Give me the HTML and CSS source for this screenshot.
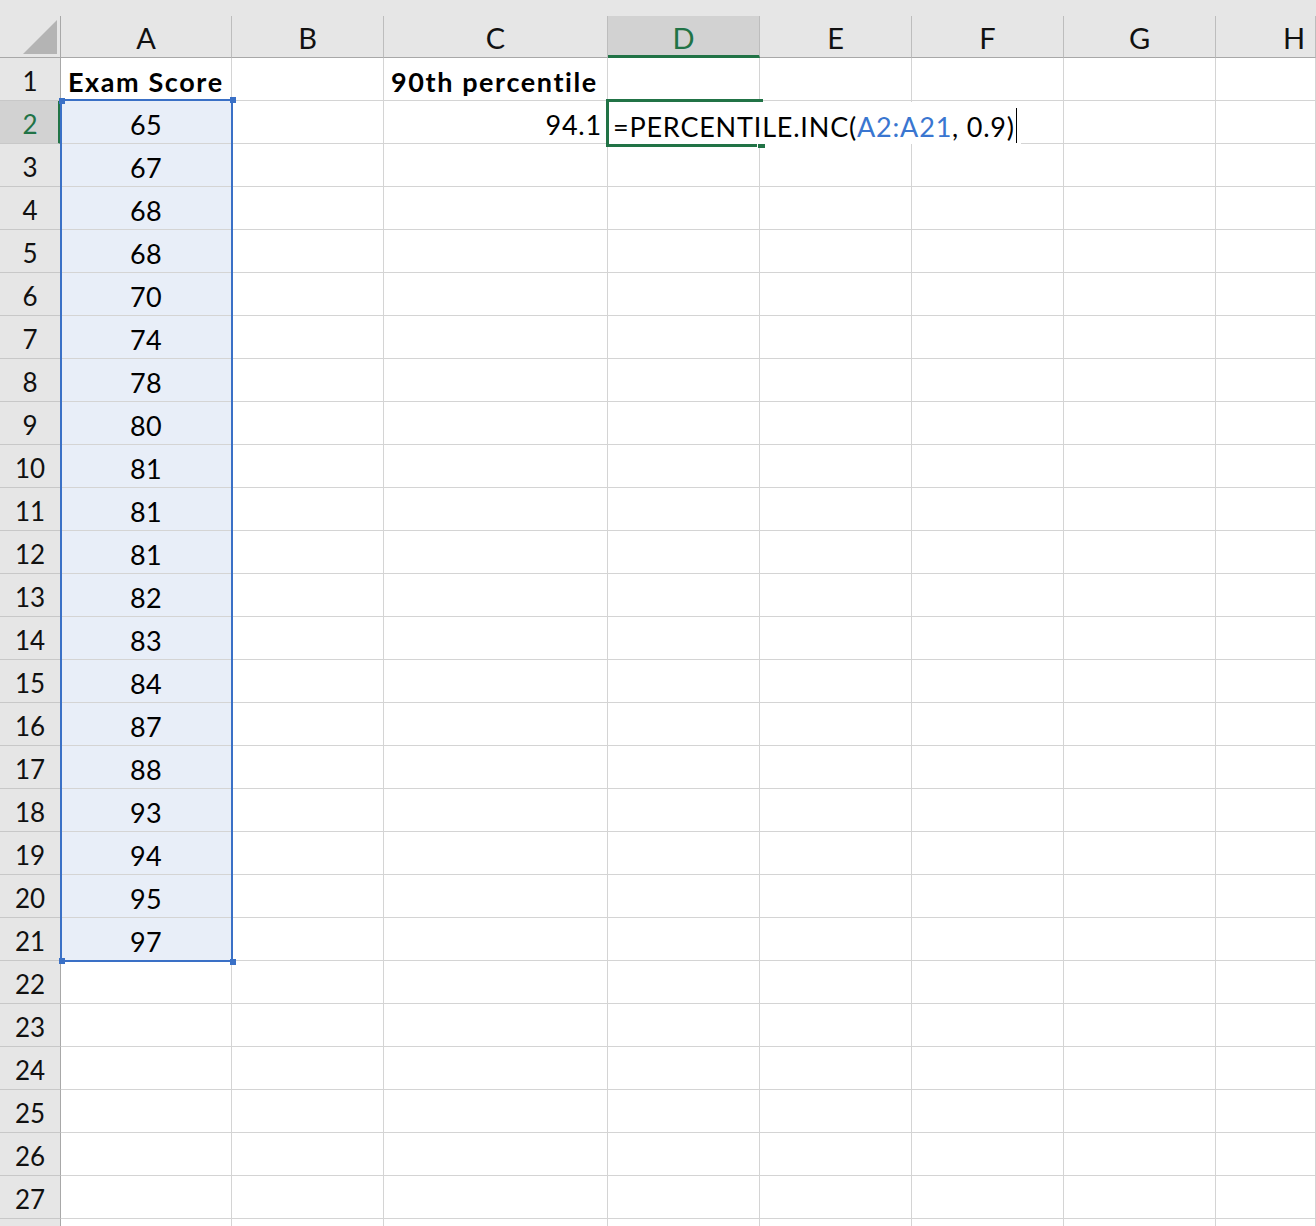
FILE: index.html
```html
<!DOCTYPE html>
<html>
<head>
<meta charset="utf-8">
<link rel="stylesheet" href="styles.css">
</head>
<body>
<div class="sheet">
  <div class="topstrip"></div>
  <div class="grid">
    <div class="corner"><svg width="36" height="36" viewBox="0 0 36 36"><polygon points="1,35 35,35 35,1" fill="#b4b4b4"/></svg></div>
    <div class="ch">A</div><div class="ch">B</div><div class="ch">C</div><div class="ch on">D</div><div class="ch">E</div><div class="ch">F</div><div class="ch">G</div><div class="ch last">H</div>

    <div class="rh">1</div><div class="c b">Exam Score</div><div class="c"></div><div class="c b">90th percentile</div><div class="c"></div><div class="c"></div><div class="c"></div><div class="c"></div><div class="c"></div>
    <div class="rh on">2</div><div class="c n sel">65</div><div class="c"></div><div class="c r">94.1</div><div class="c"></div><div class="c"></div><div class="c"></div><div class="c"></div><div class="c"></div>
    <div class="rh">3</div><div class="c n sel">67</div><div class="c"></div><div class="c"></div><div class="c"></div><div class="c"></div><div class="c"></div><div class="c"></div><div class="c"></div>
    <div class="rh">4</div><div class="c n sel">68</div><div class="c"></div><div class="c"></div><div class="c"></div><div class="c"></div><div class="c"></div><div class="c"></div><div class="c"></div>
    <div class="rh">5</div><div class="c n sel">68</div><div class="c"></div><div class="c"></div><div class="c"></div><div class="c"></div><div class="c"></div><div class="c"></div><div class="c"></div>
    <div class="rh">6</div><div class="c n sel">70</div><div class="c"></div><div class="c"></div><div class="c"></div><div class="c"></div><div class="c"></div><div class="c"></div><div class="c"></div>
    <div class="rh">7</div><div class="c n sel">74</div><div class="c"></div><div class="c"></div><div class="c"></div><div class="c"></div><div class="c"></div><div class="c"></div><div class="c"></div>
    <div class="rh">8</div><div class="c n sel">78</div><div class="c"></div><div class="c"></div><div class="c"></div><div class="c"></div><div class="c"></div><div class="c"></div><div class="c"></div>
    <div class="rh">9</div><div class="c n sel">80</div><div class="c"></div><div class="c"></div><div class="c"></div><div class="c"></div><div class="c"></div><div class="c"></div><div class="c"></div>
    <div class="rh">10</div><div class="c n sel">81</div><div class="c"></div><div class="c"></div><div class="c"></div><div class="c"></div><div class="c"></div><div class="c"></div><div class="c"></div>
    <div class="rh">11</div><div class="c n sel">81</div><div class="c"></div><div class="c"></div><div class="c"></div><div class="c"></div><div class="c"></div><div class="c"></div><div class="c"></div>
    <div class="rh">12</div><div class="c n sel">81</div><div class="c"></div><div class="c"></div><div class="c"></div><div class="c"></div><div class="c"></div><div class="c"></div><div class="c"></div>
    <div class="rh">13</div><div class="c n sel">82</div><div class="c"></div><div class="c"></div><div class="c"></div><div class="c"></div><div class="c"></div><div class="c"></div><div class="c"></div>
    <div class="rh">14</div><div class="c n sel">83</div><div class="c"></div><div class="c"></div><div class="c"></div><div class="c"></div><div class="c"></div><div class="c"></div><div class="c"></div>
    <div class="rh">15</div><div class="c n sel">84</div><div class="c"></div><div class="c"></div><div class="c"></div><div class="c"></div><div class="c"></div><div class="c"></div><div class="c"></div>
    <div class="rh">16</div><div class="c n sel">87</div><div class="c"></div><div class="c"></div><div class="c"></div><div class="c"></div><div class="c"></div><div class="c"></div><div class="c"></div>
    <div class="rh">17</div><div class="c n sel">88</div><div class="c"></div><div class="c"></div><div class="c"></div><div class="c"></div><div class="c"></div><div class="c"></div><div class="c"></div>
    <div class="rh">18</div><div class="c n sel">93</div><div class="c"></div><div class="c"></div><div class="c"></div><div class="c"></div><div class="c"></div><div class="c"></div><div class="c"></div>
    <div class="rh">19</div><div class="c n sel">94</div><div class="c"></div><div class="c"></div><div class="c"></div><div class="c"></div><div class="c"></div><div class="c"></div><div class="c"></div>
    <div class="rh">20</div><div class="c n sel">95</div><div class="c"></div><div class="c"></div><div class="c"></div><div class="c"></div><div class="c"></div><div class="c"></div><div class="c"></div>
    <div class="rh">21</div><div class="c n sel">97</div><div class="c"></div><div class="c"></div><div class="c"></div><div class="c"></div><div class="c"></div><div class="c"></div><div class="c"></div>
    <div class="rh">22</div><div class="c"></div><div class="c"></div><div class="c"></div><div class="c"></div><div class="c"></div><div class="c"></div><div class="c"></div><div class="c"></div>
    <div class="rh">23</div><div class="c"></div><div class="c"></div><div class="c"></div><div class="c"></div><div class="c"></div><div class="c"></div><div class="c"></div><div class="c"></div>
    <div class="rh">24</div><div class="c"></div><div class="c"></div><div class="c"></div><div class="c"></div><div class="c"></div><div class="c"></div><div class="c"></div><div class="c"></div>
    <div class="rh">25</div><div class="c"></div><div class="c"></div><div class="c"></div><div class="c"></div><div class="c"></div><div class="c"></div><div class="c"></div><div class="c"></div>
    <div class="rh">26</div><div class="c"></div><div class="c"></div><div class="c"></div><div class="c"></div><div class="c"></div><div class="c"></div><div class="c"></div><div class="c"></div>
    <div class="rh">27</div><div class="c"></div><div class="c"></div><div class="c"></div><div class="c"></div><div class="c"></div><div class="c"></div><div class="c"></div><div class="c"></div>
    <div class="rh"></div><div class="c"></div><div class="c"></div><div class="c"></div><div class="c"></div><div class="c"></div><div class="c"></div><div class="c"></div><div class="c"></div>
  </div>

  <div class="range">
    <span class="hd tl"></span><span class="hd tr"></span><span class="hd bl"></span><span class="hd br"></span>
  </div>
  <div class="active"><span class="fill"></span></div>
  <div class="editor">=PERCENTILE.INC(<span class="ref">A2:A21</span>, 0.9)<span class="caret"></span></div>
</div>
</body>
</html>
```

FILE: styles.css
```css
html, body {
  margin: 0;
  padding: 0;
  background: #ffffff;
  overflow: hidden;
}

.sheet {
  position: relative;
  width: 1316px;
  height: 1226px;
  overflow: hidden;
  font-family: Lato, "Open Sans", sans-serif;
  font-size: 27px;
  color: #000;
}

.topstrip {
  height: 16px;
  background: #e6e6e6;
}

.grid {
  display: grid;
  grid-template-columns: 61px 171px 152px 224px 152px 152px 152px 152px 100px;
  grid-template-rows: 42px repeat(28, 43px);
}

.corner {
  background: #e6e6e6;
  border-right: 1px solid #a8a8a8;
  border-bottom: 1px solid #a8a8a8;
  box-sizing: border-box;
  display: flex;
  align-items: flex-start;
  justify-content: flex-end;
  padding: 3px 2px 0 0;
}

.ch {
  box-sizing: border-box;
  background: #e6e6e6;
  border-right: 1px solid #bdbdbd;
  border-bottom: 1px solid #a8a8a8;
  display: flex;
  align-items: flex-end;
  justify-content: center;
  font-size: 29px;
  line-height: 31px;
  padding-bottom: 4px;
  color: #111;
}

.ch.on {
  background: #d2d2d2;
  color: #217346;
  border-bottom: 3px solid #217346;
  padding-bottom: 2px;
}

.ch.last {
  justify-content: flex-start;
  padding-left: 67px;
}

.rh {
  box-sizing: border-box;
  background: #e6e6e6;
  border-right: 1px solid #a8a8a8;
  border-bottom: 1px solid #c8c8c8;
  display: flex;
  align-items: flex-end;
  justify-content: center;
  font-size: 26px;
  line-height: 31px;
  padding-bottom: 3px;
  color: #111;
}

.rh.on {
  background: #d2d2d2;
  color: #217346;
  border-right: 3px solid #217346;
  padding-left: 2px;
}

.c {
  box-sizing: border-box;
  border-right: 1px solid #d4d4d4;
  border-bottom: 1px solid #d4d4d4;
  display: flex;
  align-items: flex-end;
  justify-content: flex-start;
  line-height: 31px;
  letter-spacing: 0.8px;
  padding: 0 5px 3px 7px;
  white-space: nowrap;
}

.c.b { font-weight: 700; letter-spacing: 1.6px; }
.c.n { justify-content: center; padding-left: 0; padding-right: 0; letter-spacing: 0.3px; }
.c.r { justify-content: flex-end; padding-right: 5px; }
.c.sel { background: #e8eef8; }

.range {
  position: absolute;
  left: 60px;
  top: 99px;
  width: 173px;
  height: 863px;
  box-sizing: border-box;
  border: 2px solid #3a70c6;
}

.hd {
  position: absolute;
  width: 6px;
  height: 6px;
  background: #3a70c6;
}
.hd.tl { left: -3px; top: -3px; }
.hd.tr { right: -5px; top: -4px; }
.hd.bl { left: -3px; bottom: -4px; }
.hd.br { right: -5px; bottom: -5px; }

.active {
  position: absolute;
  left: 606px;
  top: 99px;
  width: 157px;
  height: 48px;
  box-sizing: border-box;
  border: 3px solid #217346;
  border-right: none;
}

.fill {
  position: absolute;
  right: -2px;
  bottom: -4px;
  width: 7px;
  height: 7px;
  background: #217346;
  border-left: 1px solid #fff;
}

.editor {
  position: absolute;
  left: 609px;
  top: 102px;
  height: 42px;
  box-sizing: border-box;
  background: #fff;
  display: flex;
  align-items: flex-end;
  line-height: 31px;
  letter-spacing: 0.8px;
  padding: 0 4px 2px 4px;
  white-space: pre;
}

.ref { color: #3a76d0; }

.caret {
  display: inline-block;
  width: 1px;
  height: 35px;
  background: #000;
  margin-left: 1px;
  margin-bottom: -1px;
}
```
